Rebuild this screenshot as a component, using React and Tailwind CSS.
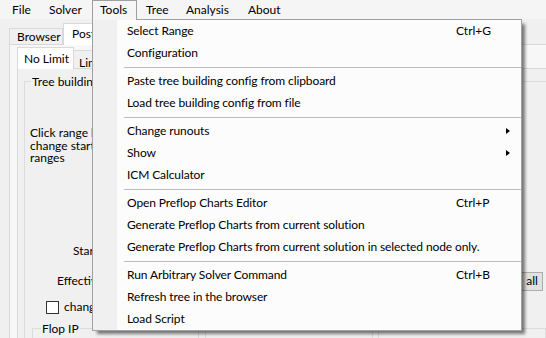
import React from "react";

const items = [
  { t: "Select Range", k: "Ctrl+G" },
  { t: "Configuration" },
  "sep",
  { t: "Paste tree building config from clipboard" },
  { t: "Load tree building config from file" },
  "sep",
  { t: "Change runouts", sub: true },
  { t: "Show", sub: true },
  { t: "ICM Calculator" },
  "sep",
  { t: "Open Preflop Charts Editor", k: "Ctrl+P" },
  { t: "Generate Preflop Charts from current solution" },
  { t: "Generate Preflop Charts from current solution in selected node only." },
  "sep",
  { t: "Run Arbitrary Solver Command", k: "Ctrl+B" },
  { t: "Refresh tree in the browser" },
  { t: "Load Script" },
];

function Menu() {
  return (
    <div className="absolute left-[92px] top-[19px] z-10 w-[430px] border border-[#a0a0a0] bg-[#fcfcfc] shadow-[4px_4px_3px_-1px_rgba(0,0,0,0.5)]">
      {items.map((it, i) =>
        it === "sep" ? (
          <div key={i} className="flex h-[6px]">
            <div className="w-[24px] bg-[#f0f0f0]" />
            <div className="flex flex-1 items-center pl-[7px]">
              <div className="h-px w-full bg-[#bdbdbd]" />
            </div>
          </div>
        ) : (
          <div key={i} className="flex h-[22px]">
            <div className="w-[24px] bg-[#f0f0f0]" />
            <div className="flex w-[339px] items-center pl-[10px] whitespace-nowrap tracking-[-0.1px]">{it.t}</div>
            <div className="flex w-[50px] items-center whitespace-nowrap">{it.k || ""}</div>
            <div className="flex flex-1 items-center">
              {it.sub && (
                <div className="h-0 w-0 border-y-[3px] border-l-[4px] border-y-transparent border-l-black" />
              )}
            </div>
          </div>
        )
      )}
    </div>
  );
}

export default function App() {
  return (
    <div className="relative flex h-[338px] w-[546px] flex-col overflow-hidden bg-[#f0f0f0] font-['Lato',sans-serif] text-[12px] leading-none text-black">
      {/* menubar */}
      <div className="flex h-[19px] shrink-0 items-start bg-[#f5f5f5] pl-[4px]">
        <div className="flex h-[19px] w-[37px] items-center pl-[8px]">File</div>
        <div className="flex h-[19px] w-[51px] items-center pl-[8px]">Solver</div>
        <div className="relative z-20 flex h-[20px] w-[45px] items-center border-x border-t border-[#a0a0a0] bg-[#f5f5f5] pb-[1px] pl-[7px]">Tools</div>
        <div className="flex h-[19px] w-[40px] items-center pl-[9px]">Tree</div>
        <div className="flex h-[19px] w-[62px] items-center pl-[9px]">Analysis</div>
        <div className="flex h-[19px] items-center pl-[9px]">About</div>
      </div>

      {/* outer tabs */}
      <div className="flex h-[25px] shrink-0 items-end pl-[9px]">
        <div className="flex h-[16px] w-[54px] items-center border border-b-0 border-[#d9d9d9] bg-[#f0f0f0] pl-[7px]">Browser</div>
        <div className="relative z-[1] -mb-px h-[22px] w-[70px] border border-b-0 border-[#d9d9d9] bg-white pl-[8px] pt-[4px]">Postflop</div>
      </div>

      {/* outer page */}
      <div className="ml-[9px] w-[560px] flex-1 border border-[#d9d9d9] bg-[#f7f7f7] pl-[7px]">
        {/* inner tabs */}
        <div className="flex h-[23px] items-end">
          <div className="relative z-[1] -mb-px h-[22px] w-[57px] border border-b-0 border-[#d9d9d9] bg-white pl-[6px] pt-[5px]">No Limit</div>
          <div className="h-[18px] w-[60px] border border-b-0 border-l-0 border-[#d9d9d9] bg-[#f0f0f0] pl-[5px] pt-[6px]">Limit</div>
        </div>
        {/* inner page */}
        <div className="h-[300px] w-[538px] border border-[#d9d9d9] bg-[#f0f0f0] pl-[6px] pt-[12px]">
          <div className="relative h-[300px] w-[526px] border-l border-t border-[#dcdcdc]">
            <div className="absolute -top-[7px] left-[6px] bg-[#f0f0f0] px-[1px] leading-[13px]">Tree building</div>
            <div className="pl-[5px] pt-[45px] leading-[12.5px] whitespace-nowrap">
              Click range buttons to
              <br />
              change starting
              <br />
              ranges
            </div>
            <div className="mt-[76px] flex h-[20px] items-center pl-[48px] whitespace-nowrap">Starting pot</div>
            <div className="mt-[11px] flex h-[19px] items-center pl-[32px]">
              <span className="whitespace-nowrap">Effective stack</span>
              <div className="ml-auto mr-[7px] flex h-[19px] w-[22px] items-center justify-center border border-[#adadad] bg-[#e1e1e1]">all</div>
            </div>
            <div className="mt-[10px] flex h-[13px] items-center pl-[21px]">
              <div className="h-[13px] w-[13px] border border-[#333] bg-white" />
              <span className="ml-[5px] whitespace-nowrap">change stacks</span>
            </div>
            <div className="ml-[7px] mt-[14px] flex">
              <div className="relative h-[40px] w-[167px] border border-[#dcdcdc]">
                <div className="absolute -top-[7px] left-[8px] bg-[#f0f0f0] px-[1px] leading-[13px]">Flop IP</div>
              </div>
              <div className="ml-[6px] h-[40px] w-[168px] border border-[#dcdcdc]" />
              <div className="ml-[5px] h-[40px] w-[168px] border border-[#dcdcdc]" />
            </div>
          </div>
        </div>
      </div>

      <Menu />
    </div>
  );
}
